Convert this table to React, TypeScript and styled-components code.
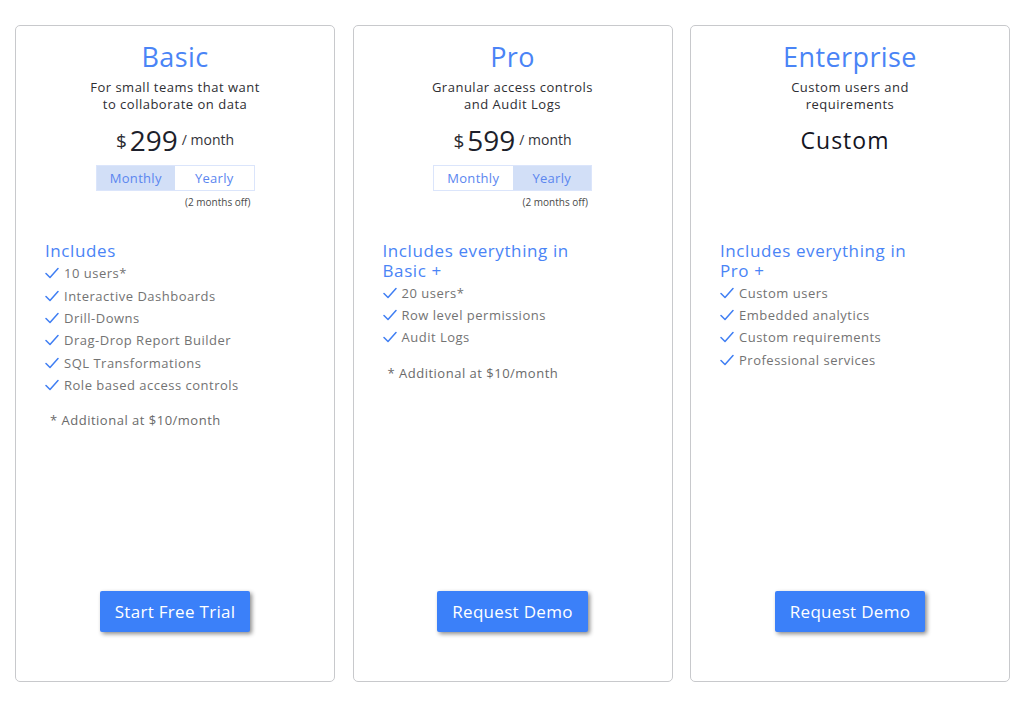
import React from "react";
import styled, { createGlobalStyle } from "styled-components";

const Global = createGlobalStyle`
  html, body { margin: 0; padding: 0; background: #ffffff; }
  body { font-family: "Open Sans", "Noto Sans", sans-serif; }
  * { box-sizing: border-box; }
`;

const Page = styled.div`
  display: grid;
  grid-template-columns: repeat(3, 320px);
  column-gap: 17.5px;
  padding: 25px 0 0 15px;
`;

const Card = styled.div`
  height: 657px;
  border: 1px solid #c8c9cc;
  border-radius: 5px;
  display: flex;
  flex-direction: column;
  padding: 14px 0 49px;
`;

const Header = styled.div`
  height: 201px;
  display: flex;
  flex-direction: column;
  align-items: center;
`;

const Title = styled.div`
  font-size: 27px;
  line-height: 34px;
  letter-spacing: 0.4px;
  color: #4a84f6;
`;

const Subtitle = styled.div`
  margin-top: 5px;
  font-size: 13px;
  line-height: 17px;
  color: #2e2e33;
  text-align: center;
  letter-spacing: 0.5px;
`;

const PriceRow = styled.div`
  margin-top: 10px;
  height: 34px;
  display: flex;
  align-items: center;
  color: #1d1f2b;
`;

const Dollar = styled.span`
  font-size: 19px;
  line-height: 20px;
  margin-right: 3px;
  margin-top: 1px;
  color: #2a2a30;
`;

const Amount = styled.span`
  font-size: 28px;
  line-height: 34px;
`;

const Per = styled.span`
  font-size: 14px;
  line-height: 18px;
  margin-left: 4px;
  color: #33343a;
`;

const CustomPrice = styled.div`
  margin-top: 10px;
  margin-right: 10px;
  font-size: 23px;
  line-height: 34px;
  letter-spacing: 1px;
  color: #14151f;
`;

const ToggleWrap = styled.div`
  margin-top: 8px;
  width: 159px;
  display: flex;
  flex-direction: column;
`;

const Toggle = styled.div`
  display: flex;
  height: 26px;
  border: 1px solid #dbe5fb;
`;

const ToggleOption = styled.div<{ $active: boolean }>`
  flex: 1;
  display: flex;
  align-items: center;
  justify-content: center;
  font-size: 13px;
  letter-spacing: 0.3px;
  color: #5b86ef;
  background: ${(p) => (p.$active ? "#d2dff7" : "#ffffff")};
`;

const MonthsOff = styled.div`
  margin-top: 4px;
  font-size: 10px;
  line-height: 14px;
  color: #4a4a4a;
  text-align: right;
  padding-right: 4px;
`;

const Features = styled.div`
  padding: 0 29px;
  display: flex;
  flex-direction: column;
`;

const Includes = styled.div`
  font-size: 17px;
  line-height: 19.5px;
  letter-spacing: 0.6px;
  color: #4a84f6;
`;

const List = styled.ul`
  list-style: none;
  margin: 1.5px 0 0;
  padding: 0;
`;

const Item = styled.li`
  display: flex;
  align-items: center;
  height: 22.4px;
  font-size: 13px;
  letter-spacing: 0.5px;
  color: #737373;
  gap: 5px;
`;

const Note = styled.div`
  margin-top: 15px;
  padding-left: 5px;
  font-size: 13px;
  line-height: 18px;
  letter-spacing: 0.5px;
  color: #6a6a6a;
`;

const Footer = styled.div`
  margin-top: auto;
  display: flex;
  justify-content: center;
`;

const Button = styled.button`
  height: 41px;
  padding: 0 15px;
  border: none;
  border-radius: 2px;
  background: #3b80f9;
  color: #ffffff;
  font-family: inherit;
  font-size: 17px;
  letter-spacing: 0.3px;
  box-shadow: 2px 2px 4px rgba(0, 0, 0, 0.45);
  cursor: pointer;
`;

const Check = () => (
  <svg width="14" height="12" viewBox="0 0 14 12" fill="none">
    <path d="M1 6.5 L5 10.5 L13 1.5" stroke="#3f7ef3" strokeWidth="1.5" strokeLinecap="round" strokeLinejoin="round" />
  </svg>
);

type Plan = {
  title: string;
  sub: string[];
  price?: string;
  active?: "m" | "y";
  includes: string[];
  items: string[];
  note?: boolean;
  cta: string;
};

const plans: Plan[] = [
  {
    title: "Basic",
    sub: ["For small teams that want", "to collaborate on data"],
    price: "299",
    active: "m",
    includes: ["Includes"],
    items: [
      "10 users*",
      "Interactive Dashboards",
      "Drill-Downs",
      "Drag-Drop Report Builder",
      "SQL Transformations",
      "Role based access controls",
    ],
    note: true,
    cta: "Start Free Trial",
  },
  {
    title: "Pro",
    sub: ["Granular access controls", "and Audit Logs"],
    price: "599",
    active: "y",
    includes: ["Includes everything in", "Basic +"],
    items: ["20 users*", "Row level permissions", "Audit Logs"],
    note: true,
    cta: "Request Demo",
  },
  {
    title: "Enterprise",
    sub: ["Custom users and", "requirements"],
    includes: ["Includes everything in", "Pro +"],
    items: ["Custom users", "Embedded analytics", "Custom requirements", "Professional services"],
    cta: "Request Demo",
  },
];

export default function App() {
  return (
    <>
      <Global />
      <Page>
        {plans.map((p) => (
          <Card key={p.title}>
            <Header>
              <Title>{p.title}</Title>
              <Subtitle>
                {p.sub[0]}
                <br />
                {p.sub[1]}
              </Subtitle>
              {p.price ? (
                <>
                  <PriceRow>
                    <Dollar>$</Dollar>
                    <Amount>{p.price}</Amount>
                    <Per>/ month</Per>
                  </PriceRow>
                  <ToggleWrap>
                    <Toggle>
                      <ToggleOption $active={p.active === "m"}>Monthly</ToggleOption>
                      <ToggleOption $active={p.active === "y"}>Yearly</ToggleOption>
                    </Toggle>
                    <MonthsOff>(2 months off)</MonthsOff>
                  </ToggleWrap>
                </>
              ) : (
                <CustomPrice>Custom</CustomPrice>
              )}
            </Header>
            <Features>
              <Includes>
                {p.includes.map((l, i) => (
                  <div key={i}>{l}</div>
                ))}
              </Includes>
              <List>
                {p.items.map((it) => (
                  <Item key={it}>
                    <Check />
                    {it}
                  </Item>
                ))}
              </List>
              {p.note && <Note>* Additional at $10/month</Note>}
            </Features>
            <Footer>
              <Button>{p.cta}</Button>
            </Footer>
          </Card>
        ))}
      </Page>
    </>
  );
}
